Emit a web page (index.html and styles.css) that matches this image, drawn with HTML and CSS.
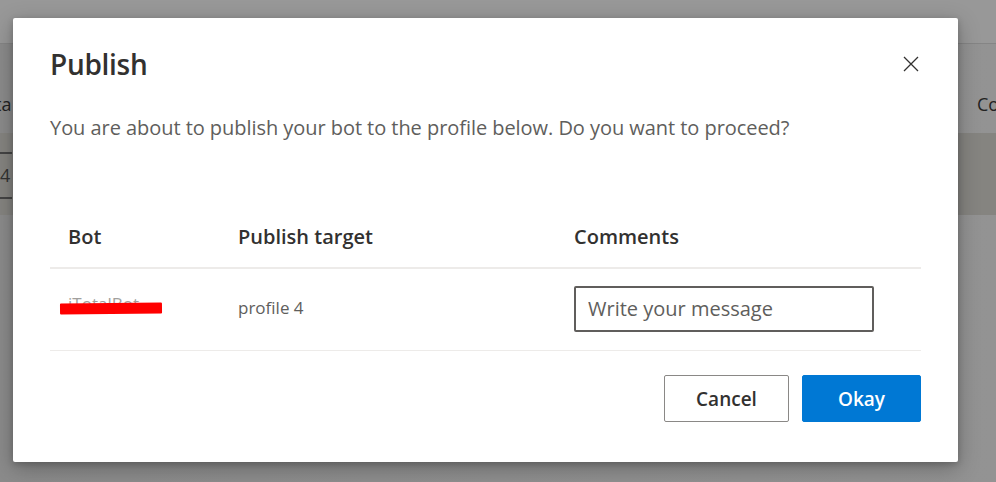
FILE: index.html
```
<!DOCTYPE html>
<html lang="en">
<head>
<meta charset="UTF-8">
<title>Publish</title>
<link rel="stylesheet" href="styles.css">
</head>
<body>

<!-- ===== page behind the dialog ===== -->
<div class="page">
  <div class="page-top"></div>
  <div class="page-head">
    <span class="ph-left">ta</span>
    <span class="ph-right">Co</span>
  </div>
  <div class="page-row">
    <span class="pr-cell">4</span>
  </div>
</div>

<!-- ===== dialog ===== -->
<div class="dialog">
  <div class="dlg-head">
    <h1>Publish</h1>
    <button class="close" aria-label="Close">
      <svg width="16" height="16" viewBox="0 0 16 16"><path d="M1 1L15 15M15 1L1 15" stroke="#323130" stroke-width="1.3" fill="none"/></svg>
    </button>
  </div>
  <p class="sub">You are about to publish your bot to the profile below. Do you want to proceed?</p>

  <div class="tbl">
    <div class="tr th">
      <div class="c1">Bot</div>
      <div class="c2">Publish target</div>
      <div class="c3">Comments</div>
    </div>
    <div class="tr td">
      <div class="c1"><span class="botname">iTotalBot</span><span class="redact"></span></div>
      <div class="c2">profile 4</div>
      <div class="c3"><input class="msg" type="text" placeholder="Write your message"></div>
    </div>
  </div>

  <div class="actions">
    <button class="btn">Cancel</button>
    <button class="btn primary">Okay</button>
  </div>
</div>

</body>
</html>
```
FILE: styles.css
```
:root{
  --fg:#323130;--muted:#605e5c;--line:#edebe9;--accent:#0078d4;
}
*{box-sizing:border-box;margin:0;padding:0}
body{font-family:"Open Sans","Noto Sans",sans-serif;color:var(--fg);
     background:#8d8d8d;width:996px;height:482px;overflow:hidden;position:relative}

/* background page (already dimmed) */
.page{height:482px;background:linear-gradient(90deg,#8b8b8b,#939393)}
.page-top{height:44px;background:#989898;border-bottom:1px solid #858585}
.page-head{height:89px;position:relative;font-size:18px;color:#222}
.ph-left{position:absolute;left:-5px;top:48px}
.ph-right{position:absolute;left:977px;top:48px}
.page-row{height:82px;background:#858480;position:relative;font-size:18px;color:#333}
.pr-cell{position:absolute;left:-2px;top:19px;width:14px;height:47px;
         border-top:2px solid #444;border-bottom:2px solid #444;line-height:42px;padding-left:2px}

/* dialog */
.dialog{position:absolute;left:13px;top:18px;width:945px;height:444px;background:#fff;
        border-radius:2px;box-shadow:0 6px 22px rgba(0,0,0,.28),0 2px 6px rgba(0,0,0,.18);
        padding:0 37px}
.dlg-head{display:flex;justify-content:space-between;align-items:center;height:92px}
h1{font-size:28px;font-weight:600;color:var(--fg);letter-spacing:-.3px;margin-top:-1px}
.close{border:none;background:none;width:16px;height:16px;margin-right:2px;cursor:pointer}
.close svg{display:block}
.sub{font-size:20px;color:var(--muted);line-height:24px;letter-spacing:-.05px;margin-top:6px}

.tbl{margin-top:81px}
.tr{display:flex;align-items:center}
.th{height:48px;padding-bottom:16px;border-bottom:2px solid var(--line);font-weight:600;font-size:20px}
.td{height:82px;border-bottom:1px solid var(--line);font-size:17px;color:var(--muted)}
.c1{width:188px;padding-left:18px;position:relative}
.c2{width:336px}
.c3{flex:1}
.td .c2{margin-top:-4px}
.botname{color:#a19f9d;font-size:17px;position:relative;top:-6px}
.redact{position:absolute;left:10px;top:5px;width:102px;height:11px;background:#f00;
        border-radius:1px;transform:rotate(-.5deg)}
.msg{width:300px;height:46px;border:2px solid #605e5c;border-radius:2px;padding:0 12px;
     font:20px "Open Sans","Noto Sans",sans-serif;color:var(--fg);outline:none;margin-top:-2px}
.msg::placeholder{color:var(--muted)}

.actions{display:flex;justify-content:flex-end;gap:13px;margin-top:24px}
.btn{height:47px;border:1px solid #8a8886;border-radius:2px;background:#fff;color:var(--fg);
     font:600 19px "Open Sans","Noto Sans",sans-serif;width:125px;cursor:pointer}
.btn.primary{background:var(--accent);border-color:var(--accent);color:#fff;width:119px}
```
